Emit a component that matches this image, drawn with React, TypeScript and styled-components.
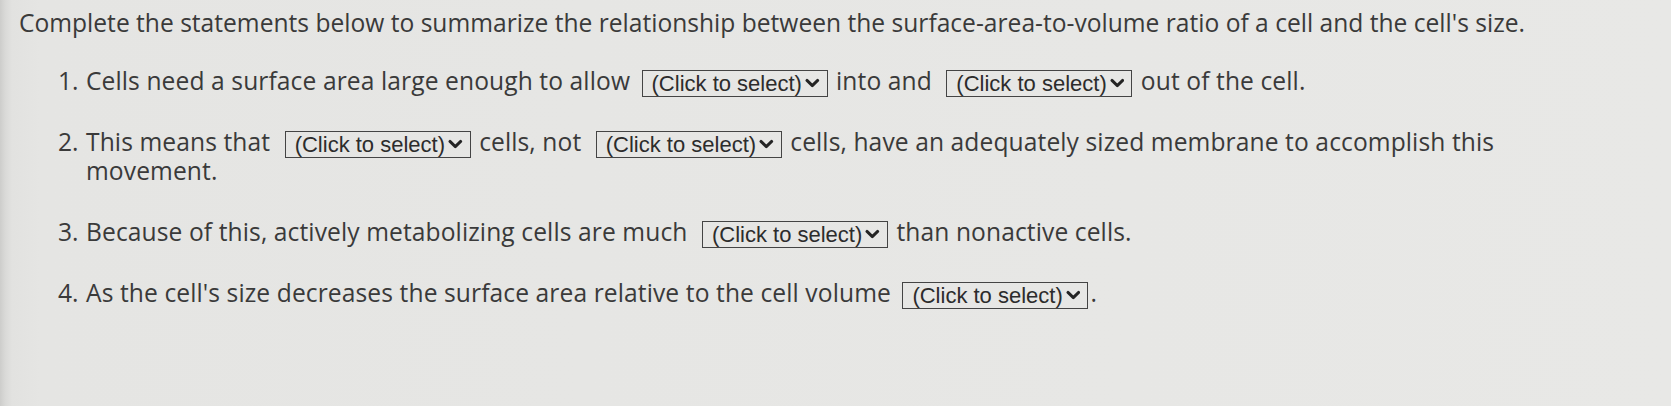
import styled, { createGlobalStyle } from "styled-components";

const GlobalStyle = createGlobalStyle`
  html, body {
    margin: 0;
    padding: 0;
    background: #e5e5e3;
  }
  * {
    box-sizing: border-box;
  }
`;

// Page with the slightly darker strip on the left edge
const Page = styled.div`
  width: 1671px;
  height: 406px;
  overflow: hidden;
  padding: 8px 110px 0 19px;
  background: linear-gradient(
    to right,
    #cdcdcb 0px,
    #d9d9d7 5px,
    #e2e2e0 12px,
    #e5e5e3 40px,
    #e8e8e6 100%
  );
  font-family: "Open Sans", Lato, sans-serif;
  font-size: 24.6px;
  color: #3a3a3a;
`;

const Prompt = styled.p`
  margin: 0;
  line-height: 30px;
`;

const Statements = styled.ol`
  margin: 28px 0 0 39px;
  padding: 0;
  list-style: none;
  letter-spacing: 0.1px;
`;

const Statement = styled.li`
  display: flex;
  line-height: 29px;
  margin-bottom: 32px;
`;

const Number = styled.span`
  flex: 0 0 28px;
  letter-spacing: 0;
`;

const Body = styled.span`
  flex: 1;
`;

const Select = styled.span<{ $wide?: boolean }>`
  display: inline-flex;
  align-items: center;
  gap: 3px;
  height: 27px;
  width: 186px;
  padding: 0 7px 0 9px;
  margin: -3px 2px -3px ${(p) => (p.$wide ? 8 : 5)}px;
  vertical-align: middle;
  border: 1px solid #444444;
  font-family: "Liberation Sans", Arial, sans-serif;
  font-size: 22px;
  letter-spacing: 0;
  line-height: 25px;
  color: #2c2c2c;
  white-space: nowrap;
  cursor: pointer;
`;

const Chevron = () => (
  <svg width="17" height="12" viewBox="0 0 17 12" aria-hidden="true">
    <path
      d="M2.3 3 L8.5 9 L14.7 3"
      fill="none"
      stroke="#242424"
      strokeWidth="3.4"
      strokeLinecap="round"
      strokeLinejoin="round"
    />
  </svg>
);

const Dropdown = ({ wide }: { wide?: boolean }) => (
  <Select $wide={wide}>
    (Click to select)
    <Chevron />
  </Select>
);

export default function App() {
  return (
    <>
      <GlobalStyle />
      <Page>
        <Prompt>
          Complete the statements below to summarize the relationship between the
          surface-area-to-volume ratio of a cell and the cell's size.
        </Prompt>
        <Statements>
          <Statement>
            <Number>1.</Number>
            <Body>
              Cells need a surface area large enough to allow <Dropdown /> into and{" "}
              <Dropdown wide /> out of the cell.
            </Body>
          </Statement>
          <Statement>
            <Number>2.</Number>
            <Body>
              This means that <Dropdown wide /> cells, not <Dropdown wide /> cells,
              have an adequately sized membrane to accomplish this movement.
            </Body>
          </Statement>
          <Statement>
            <Number>3.</Number>
            <Body>
              Because of this, actively metabolizing cells are much <Dropdown wide />{" "}
              than nonactive cells.
            </Body>
          </Statement>
          <Statement>
            <Number>4.</Number>
            <Body>
              As the cell's size decreases the surface area relative to the cell
              volume <Dropdown />.
            </Body>
          </Statement>
        </Statements>
      </Page>
    </>
  );
}
